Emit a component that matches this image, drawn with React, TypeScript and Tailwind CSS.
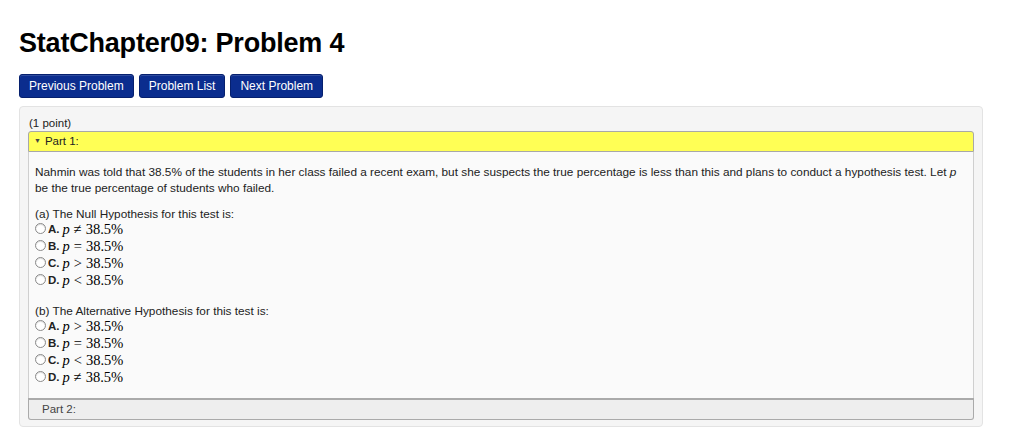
const sans = { fontFamily: '"Liberation Sans", Arial, Helvetica, sans-serif' };

const Radio = () => (
  <span className="inline-block w-[11px] h-[11px] rounded-full border border-[#8a8a8a] bg-white mr-[2px] align-[-1px] shadow-[inset_0_1px_1px_rgba(0,0,0,0.15)]" />
);

const Opt = ({ letter, rel }: { letter: string; rel: string }) => (
  <div className="flex items-center h-[17px]">
    <Radio />
    <span className="font-bold text-[11.5px] text-[#222]">{letter}.</span>
    <span className="ml-[3px] text-[14.5px] text-black" style={{ fontFamily: '"Liberation Serif", "Times New Roman", serif' }}>
      <i>p</i>
      <span className="mx-[4px]">{rel}</span>38.5%
    </span>
  </div>
);

export default function App() {
  const btn = 'h-[24px] px-[9px] rounded-[3px] bg-[#0b2d8e] border border-[#06206e] text-white text-[12px] leading-none shadow-[inset_0_1px_0_rgba(255,255,255,0.15)]';
  return (
    <div className="w-[1024px] h-[441px] bg-white text-[#222] overflow-hidden pl-[19px] pt-[28px]" style={sans}>
      <h1 className="text-[27px] font-bold text-black leading-[30px] tracking-[-0.2px]">StatChapter09: Problem 4</h1>
      <div className="flex gap-[5px] mt-[16px]">
        <button className={btn}>Previous Problem</button>
        <button className={btn}>Problem List</button>
        <button className={btn}>Next Problem</button>
      </div>
      <div className="mt-[8px] w-[964px] h-[321px] bg-[#f5f5f5] border border-[#e3e3e3] rounded-[4px] px-[8px] pt-[9px]">
        <div className="text-[11.5px] leading-[15px] ml-[1px]">(1 point)</div>
        <div className="h-[21px] bg-[#ffff55] border border-[#a8a8a8] rounded-t-[3px] flex items-center pl-[5px] text-[11.5px] text-[#222]">
          <span className="text-[7px] mr-[4px] text-[#444]">▼</span>Part 1:
        </div>
        <div className="bg-[#fafafa] border-x border-[#cfcfcf] pl-[6px] pr-[2px] pt-[12px] pb-[13px] text-[11.8px] leading-[16px]">
          <p>
            Nahmin was told that 38.5% of the students in her class failed a recent exam, but she suspects the true percentage is less than this and plans to conduct a hypothesis test. Let <i>p</i> be the true percentage of students who failed.
          </p>
          <p className="mt-[12px] leading-[12px]">(a) The Null Hypothesis for this test is:</p>
          <Opt letter="A" rel="≠" />
          <Opt letter="B" rel="=" />
          <Opt letter="C" rel=">" />
          <Opt letter="D" rel="<" />
          <p className="mt-[17px] leading-[12px]">(b) The Alternative Hypothesis for this test is:</p>
          <Opt letter="A" rel=">" />
          <Opt letter="B" rel="=" />
          <Opt letter="C" rel="<" />
          <Opt letter="D" rel="≠" />
        </div>
        <div className="h-[22px] bg-[#eeeeee] border border-[#aaaaaa] border-t-2 rounded-b-[3px] flex items-center pl-[13px] text-[11.5px] text-[#444]">
          Part 2:
        </div>
      </div>
    </div>
  );
}
